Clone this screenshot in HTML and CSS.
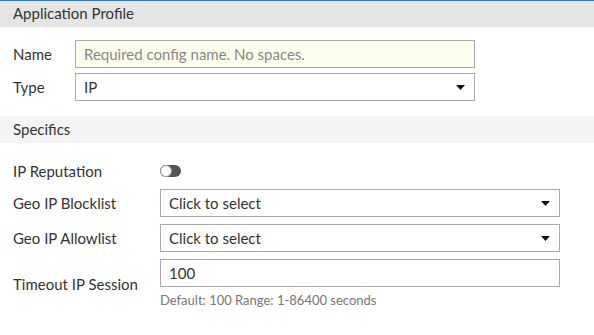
FILE: index.html
```html
<!DOCTYPE html>
<html lang="en">
<head>
  <meta charset="UTF-8">
  <meta name="viewport" content="width=device-width, initial-scale=1.0">
  <title>Application Profile</title>
  <link rel="stylesheet" href="styles.css">
</head>
<body>
  <div class="section-head main">Application Profile</div>
  <div class="form top">
    <label class="lbl" for="name">Name</label>
    <input class="field required" type="text" id="name" placeholder="Required config name. No spaces.">
    <label class="lbl">Type</label>
    <div class="field select">
      <span>IP</span>
      <svg width="9" height="5" viewBox="0 0 9 5"><path d="M0 0H9L4.5 5Z" fill="#111"/></svg>
    </div>
  </div>

  <div class="section-head sub">Specifics</div>
  <div class="form specifics">
    <label class="lbl">IP Reputation</label>
    <div class="toggle"><span class="knob"></span></div>

    <label class="lbl">Geo IP Blocklist</label>
    <div class="field select">
      <span>Click to select</span>
      <svg width="9" height="5" viewBox="0 0 9 5"><path d="M0 0H9L4.5 5Z" fill="#111"/></svg>
    </div>

    <label class="lbl">Geo IP Allowlist</label>
    <div class="field select">
      <span>Click to select</span>
      <svg width="9" height="5" viewBox="0 0 9 5"><path d="M0 0H9L4.5 5Z" fill="#111"/></svg>
    </div>

    <label class="lbl" for="timeout">Timeout IP Session</label>
    <div class="with-help">
      <input class="field" type="text" id="timeout" value="100">
      <div class="help">Default: 100 Range: 1-86400 seconds</div>
    </div>
  </div>
</body>
</html>
```

FILE: styles.css
```css
body { margin: 0; font-family: Lato, "Open Sans", sans-serif; font-size: 15px; color: #333; background: #fff; }
.section-head { padding-left: 13px; box-sizing: border-box; }
.section-head.main { height: 27px; line-height: 25px; background: #e5e5e5; border-top: 1px solid #2b7bc0; }
.section-head.sub { height: 27px; line-height: 27px; background: #f4f4f4; margin-top: 15px; }
.form { display: grid; align-items: center; padding-left: 13px; }
.form.top { grid-template-columns: 62px 400px; row-gap: 5px; padding-top: 13px; }
.form.specifics { grid-template-columns: 147px 400px; row-gap: 7px; padding-top: 17px; }
.lbl { font-size: 15px; }
.field { box-sizing: border-box; height: 28px; border: 1px solid #aaa; padding: 0 8px; font-family: inherit; font-size: 15px; color: #333; background: #fff; margin: 0; outline: none; }
.field.required { background: #fefeec; }
.field::placeholder { color: #888; }
.select { display: flex; align-items: center; justify-content: space-between; padding-right: 9px; }
.toggle { width: 21px; height: 12px; border-radius: 6px; background: #555; display: flex; align-items: center; margin: 5px 0 5px 0; }
.knob { width: 12px; height: 12px; border-radius: 50%; background: #fff; box-sizing: border-box; border: 1px solid #999; }
.with-help { display: flex; flex-direction: column; }
.help { font-size: 13px; color: #777; margin-top: 5px; }
```
